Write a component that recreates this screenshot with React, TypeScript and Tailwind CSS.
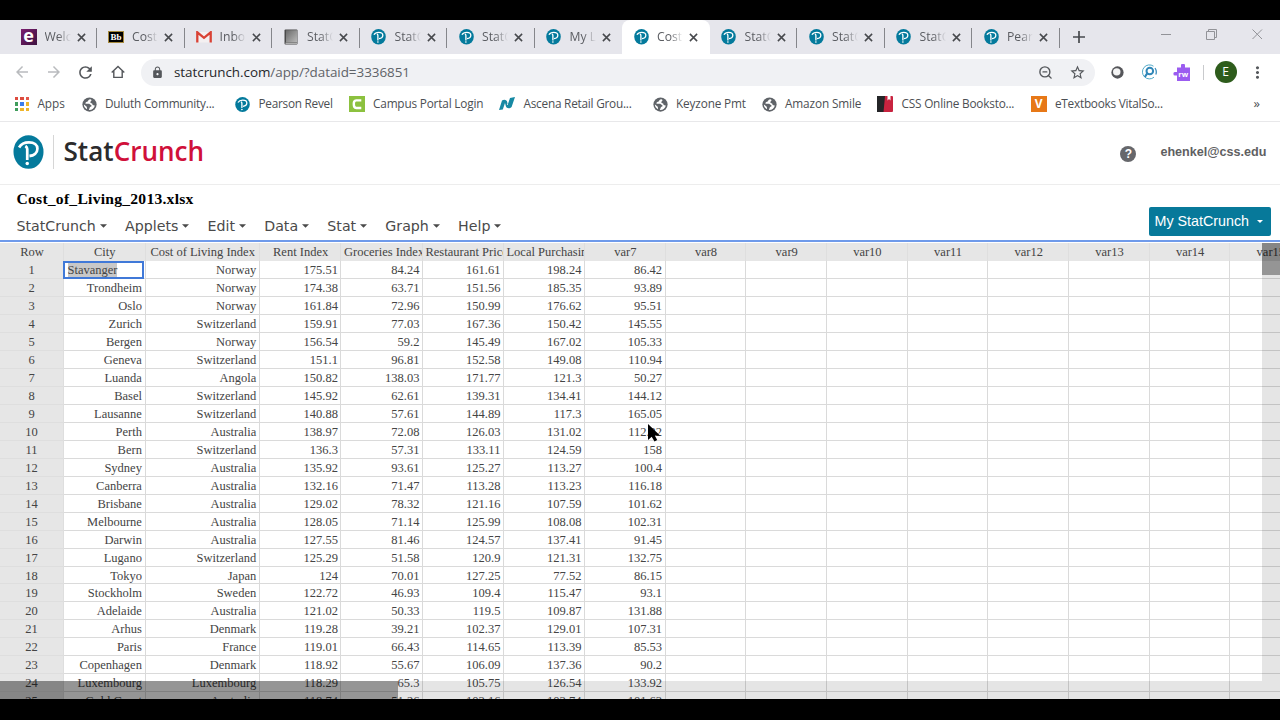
import { ZoomOut } from 'lucide-react';
import { MdArrowBack, MdArrowForward, MdLock, MdMoreVert, MdRefresh, MdStarBorder } from 'react-icons/md';
import type { ReactNode } from 'react';

type IconName = 'e' | 'bb' | 'gmail' | 'book' | 'pearson';

interface TabInfo {
  icon: IconName;
  title: string;
  active?: boolean;
}

const tabs: TabInfo[] = [
  { icon: 'e', title: 'Welc' },
  { icon: 'bb', title: 'Cost' },
  { icon: 'gmail', title: 'Inbo' },
  { icon: 'book', title: 'StatC' },
  { icon: 'pearson', title: 'StatC' },
  { icon: 'pearson', title: 'StatC' },
  { icon: 'pearson', title: 'My L' },
  { icon: 'pearson', title: 'Cost', active: true },
  { icon: 'pearson', title: 'StatC' },
  { icon: 'pearson', title: 'StatC' },
  { icon: 'pearson', title: 'StatC' },
  { icon: 'pearson', title: 'Pear' },
];

const menus = ['StatCrunch', 'Applets', 'Edit', 'Data', 'Stat', 'Graph', 'Help'];

const columns = [
  'Row', 'City', 'Cost of Living Index', 'Rent Index', 'Groceries Index', 'Restaurant Price',
  'Local Purchasing', 'var7', 'var8', 'var9', 'var10', 'var11', 'var12', 'var13', 'var14', 'var15',
];

const rows = [
  ['Stavanger', 'Norway', '175.51', '84.24', '161.61', '198.24', '86.42'],
  ['Trondheim', 'Norway', '174.38', '63.71', '151.56', '185.35', '93.89'],
  ['Oslo', 'Norway', '161.84', '72.96', '150.99', '176.62', '95.51'],
  ['Zurich', 'Switzerland', '159.91', '77.03', '167.36', '150.42', '145.55'],
  ['Bergen', 'Norway', '156.54', '59.2', '145.49', '167.02', '105.33'],
  ['Geneva', 'Switzerland', '151.1', '96.81', '152.58', '149.08', '110.94'],
  ['Luanda', 'Angola', '150.82', '138.03', '171.77', '121.3', '50.27'],
  ['Basel', 'Switzerland', '145.92', '62.61', '139.31', '134.41', '144.12'],
  ['Lausanne', 'Switzerland', '140.88', '57.61', '144.89', '117.3', '165.05'],
  ['Perth', 'Australia', '138.97', '72.08', '126.03', '131.02', '112.22'],
  ['Bern', 'Switzerland', '136.3', '57.31', '133.11', '124.59', '158'],
  ['Sydney', 'Australia', '135.92', '93.61', '125.27', '113.27', '100.4'],
  ['Canberra', 'Australia', '132.16', '71.47', '113.28', '113.23', '116.18'],
  ['Brisbane', 'Australia', '129.02', '78.32', '121.16', '107.59', '101.62'],
  ['Melbourne', 'Australia', '128.05', '71.14', '125.99', '108.08', '102.31'],
  ['Darwin', 'Australia', '127.55', '81.46', '124.57', '137.41', '91.45'],
  ['Lugano', 'Switzerland', '125.29', '51.58', '120.9', '121.31', '132.75'],
  ['Tokyo', 'Japan', '124', '70.01', '127.25', '77.52', '86.15'],
  ['Stockholm', 'Sweden', '122.72', '46.93', '109.4', '115.47', '93.1'],
  ['Adelaide', 'Australia', '121.02', '50.33', '119.5', '109.87', '131.88'],
  ['Arhus', 'Denmark', '119.28', '39.21', '102.37', '129.01', '107.31'],
  ['Paris', 'France', '119.01', '66.43', '114.65', '113.39', '85.53'],
  ['Copenhagen', 'Denmark', '118.92', '55.67', '106.09', '137.36', '90.2'],
  ['Luxembourg', 'Luxembourg', '118.29', '65.3', '105.75', '126.54', '133.92'],
  ['Gold Coast', 'Australia', '118.74', '51.26', '103.16', '103.74', '101.63'],
];

const gridCols =
  'grid grid-cols-[64px_81.5px_114.3px_81.7px_81.5px_81px_81px_80.7px_80.7px_80.7px_80.7px_80.7px_80.7px_80.7px_80.7px_80.7px]';

function PearsonIcon({ className = '' }: { className?: string }) {
  return (
    <svg viewBox="0 0 32 34" className={className} fill="none" preserveAspectRatio="none">
      <ellipse cx="16" cy="17" rx="15.5" ry="16.8" fill="#047a9c" />
      <path
        d="M6.3 12.5C8.5 8.6 12.5 7.3 16.5 7.3C22 7.3 25.2 9.8 25.2 13.7C25.2 18.2 21.5 20.6 17 21"
        stroke="#fff"
        strokeWidth="2.8"
      />
      <path d="M12.8 11C14.3 12 14.7 12.8 14.7 14V25" stroke="#fff" strokeWidth="2.8" />
      <circle cx="14.7" cy="28.5" r="1.8" fill="#fff" />
    </svg>
  );
}

function GlobeIcon() {
  return (
    <svg viewBox="0 0 16 16" className="h-[15px] w-[15px]">
      <circle cx="8" cy="8" r="7.6" fill="#5f6368" />
      <path
        d="M9 2.4C7 2.6 6.6 3.4 6.5 4.3C6.2 5.4 4.2 5 3.6 6.3C3.4 7.3 5 7.4 6.6 7.3C8.2 7.2 8.5 8 9.4 8.5C10.8 9.1 10.4 10.1 9 10.5C8 10.8 8.2 12.4 7.3 13.8C10.6 14 13.2 11.8 13.7 9C12 9.2 10.9 8.2 11 7.2C11.1 6.4 9 6.7 8.9 5.8C8.8 4.7 10 4.6 10.2 3.2Z"
        fill="#fff"
      />
      <path d="M2 8C3.5 9.2 5 9.8 5.2 11C5.4 12 5.4 12.6 5.2 13C3.4 12 1.9 10.3 2 8Z" fill="#fff" />
    </svg>
  );
}

function TabIcon({ name }: { name: IconName }) {
  if (name === 'e') {
    return (
      <span className="flex h-4 w-4 items-center justify-center bg-linear-to-br from-[#7c1d70] to-[#3d123f] pb-[4px] font-['Open_Sans',sans-serif] text-[18px] leading-none font-bold text-white">
        e
      </span>
    );
  }
  if (name === 'bb') {
    return (
      <span className="flex h-3 w-4 items-center justify-center border border-[#a78a3c] bg-black font-['Liberation_Serif',serif] text-[9px] leading-none font-bold text-white">
        Bb
      </span>
    );
  }
  if (name === 'gmail') {
    return (
      <svg viewBox="0 0 16 12" className="h-3 w-4">
        <path d="M1 1H15V11.5H1Z" fill="#f4f0f1" />
        <path d="M1.3 11.5V1.3L8 6.8L14.7 1.3V11.5" fill="none" stroke="#d94235" strokeWidth="2.3" />
      </svg>
    );
  }
  if (name === 'book') {
    return (
      <svg viewBox="0 0 14 16" className="h-4 w-3.5">
        <defs>
          <linearGradient id="cover" x1="0" y1="0" x2="1" y2="1">
            <stop offset="0" stopColor="#6a6a6a" />
            <stop offset="1" stopColor="#b9b9b9" />
          </linearGradient>
        </defs>
        <rect x=".5" y=".5" width="13" height="15" rx="1" fill="#4a4a4a" />
        <rect x="2" y="1.2" width="11" height="12" fill="url(#cover)" />
        <path d="M1.5 14.2H13" stroke="#ddd" />
      </svg>
    );
  }
  return <PearsonIcon className="h-[15.5px] w-[15px]" />;
}

function CloseIcon() {
  return (
    <svg viewBox="0 0 10 10" className="h-[9px] w-[9px]">
      <path d="M1 1L9 9M9 1L1 9" stroke="#47494d" strokeWidth="1.7" />
    </svg>
  );
}

function Tab({ tab, divider }: { tab: TabInfo; divider: boolean }) {
  return (
    <div
      className={`relative flex h-[34px] w-[87.5px] shrink-0 items-center pl-[11px] ${tab.active ? 'rounded-t-lg bg-white' : ''}`}
    >
      <span className="flex w-4 shrink-0 justify-center">
        <TabIcon name={tab.icon} />
      </span>
      <span className="ml-2 w-[26px] shrink-0 overflow-hidden mask-r-from-50% text-[12.2px] whitespace-nowrap text-[#5a5c61]">
        {tab.title}
      </span>
      <span className="ml-[6px]">
        <CloseIcon />
      </span>
      {divider && <span className="absolute top-2 right-0 h-5 w-px bg-[#85868b]" />}
    </div>
  );
}

function TabStrip() {
  return (
    <div className="flex h-[34px] shrink-0 bg-[#e6e6ec] pl-[9.5px]">
      {tabs.map((tab, i) => (
        <Tab key={i} tab={tab} divider={!tab.active && !tabs[i + 1]?.active} />
      ))}
      <svg viewBox="0 0 12 12" className="mt-[11px] ml-[13.5px] h-3 w-3">
        <path d="M6 0V12M0 6H12" stroke="#47494d" strokeWidth="1.7" />
      </svg>
      <svg viewBox="0 0 102 12" className="mt-2 ml-[76px] h-3 w-[102px]" fill="none" stroke="#929398">
        <path d="M0 6.5H10M45.5 3.5H53.5V11.5H45.5ZM47.5 3.5V1.5H55.5V9.5H53.5M91.5 1.5L101 11M101 1.5L91.5 11" />
      </svg>
    </div>
  );
}

function Toolbar() {
  return (
    <div className="flex h-[36px] shrink-0 items-center bg-white pl-[13px] text-[#54575b]">
      <MdArrowBack className="h-[18px] w-[18px] text-[#b9bbbe]" />
      <MdArrowForward className="ml-[14px] h-[18px] w-[18px] text-[#b9bbbe]" />
      <MdRefresh className="ml-[13px] h-[19px] w-[19px]" />
      <svg viewBox="0 0 14 14" className="ml-[15.5px] h-[14px] w-[14px]" fill="none" stroke="currentColor" strokeWidth="1.4">
        <path d="M.7 7.4L7 1.4L13.3 7.4M2.8 6V12.4H11.2V6" />
      </svg>
      <div className="ml-[16px] flex h-[27px] w-[954px] items-center rounded-full bg-[#f0f1f4] pl-[10px]">
        <MdLock className="h-[13px] w-[13px]" />
        <span className="ml-[10.5px] text-[13.45px] tracking-[-0.05px] text-[#5f6368]">
          <span className="text-[#26282b]">statcrunch.com</span>/app/?dataid=3336851
        </span>
        <ZoomOut className="ml-auto h-[15px] w-[15px]" strokeWidth={2.2} />
        <MdStarBorder className="mr-[9px] ml-[16px] h-[17px] w-[17px]" />
      </div>
      <svg viewBox="0 0 14 14" className="ml-[16px] h-[13px] w-[13px]">
        <circle cx="7" cy="7" r="6.6" fill="#55565a" />
        <circle cx="6.2" cy="6.3" r="4" fill="#f5f5f5" />
      </svg>
      <svg viewBox="0 0 16 16" className="ml-[17.5px] h-4 w-4" fill="none" stroke="#3187b8">
        <path d="M12.5 2.2A7 7 0 1 0 13 13.2" strokeWidth="1" stroke="#52aac8" />
        <path d="M14 4A7 7 0 0 1 14.8 10.5" strokeWidth="1.2" />
        <circle cx="8.8" cy="7" r="3.3" strokeWidth="2" />
        <path d="M6.4 9.2L3.8 13" strokeWidth="2.2" />
      </svg>
      <svg viewBox="0 0 17 17" className="ml-[15.5px] h-[17px] w-[17px]">
        <path d="M4 3.5H8V1.5A1.5 1.5 0 0 1 12 1.5V3.5H17V17H4V11.5H2.6A1.8 1.8 0 1 1 2.6 8H4Z" fill="#9b5cf0" />
        <text x="5.3" y="12.5" fill="#fff" fontSize="7.5" fontWeight="700" fontFamily="Open Sans, sans-serif">
          rw
        </text>
      </svg>
      <span className="ml-[13px] h-[15px] w-px bg-[#c9cacd]" />
      <span className="ml-[11px] flex h-[22px] w-[22px] items-center justify-center rounded-full bg-[#2e5c1c] text-[12px] text-white">
        E
      </span>
      <MdMoreVert className="ml-[11.5px] h-[19px] w-[19px]" />
    </div>
  );
}

function Bookmark({ icon, label, className }: { icon: ReactNode; label: string; className: string }) {
  return (
    <div className={`flex shrink-0 items-center whitespace-nowrap ${className}`}>
      {icon}
      <span className="ml-[8.5px]">{label}</span>
    </div>
  );
}

function AppsIcon() {
  const colors = ['#dd4b3e', '#dd4b3e', '#e2574b', '#3f9d5c', '#3b7ded', '#efb52b', '#3f9d5c', '#efb52b', '#efb52b'];
  return (
    <span className="grid grid-cols-3 gap-[2px]">
      {colors.map((color, i) => (
        <span key={i} className="h-[3.3px] w-[3.3px]" style={{ backgroundColor: color }} />
      ))}
    </span>
  );
}

function Bookmarks() {
  return (
    <div className="flex h-[32px] shrink-0 items-center border-b border-[#e8e8ea] bg-white pb-[3px] pl-[15px] text-[11.8px] text-[#4c4f53]">
      <Bookmark icon={<AppsIcon />} label="Apps" className="w-[66.5px]" />
      <Bookmark icon={<GlobeIcon />} label="Duluth Community..." className="w-[153.5px] tracking-[-0.23px]" />
      <Bookmark icon={<PearsonIcon className="h-[15px] w-[15px]" />} label="Pearson Revel" className="w-[113.5px] tracking-[-0.26px]" />
      <Bookmark
        icon={
          <svg viewBox="0 0 16 16" className="h-4 w-4">
            <rect width="16" height="16" fill="#8cc13f" />
            <path d="M12.3 4.4H7.2C5 4.4 4.8 6 4.8 8C4.8 10.5 5.3 12 7.2 12H12.3" fill="none" stroke="#fff" strokeWidth="2.4" />
          </svg>
        }
        label="Campus Portal Login"
        className="w-[150.5px] tracking-[-0.18px]"
      />
      <Bookmark
        icon={
          <svg viewBox="0 0 16 14" className="h-3.5 w-4">
            <path d="M0 13L3 3.5C5 2 8 2.5 8.3 5.5L8.6 8L11 1L16 0L12.6 10C11 11.6 7.6 12 6.8 9L6 6L3.8 12.5Z" fill="#1689a3" />
          </svg>
        }
        label="Ascena Retail Grou..."
        className="w-[153.5px] tracking-[-0.23px]"
      />
      <Bookmark icon={<GlobeIcon />} label="Keyzone Pmt" className="w-[109px] tracking-[-0.15px]" />
      <Bookmark icon={<GlobeIcon />} label="Amazon Smile" className="w-[115.5px] tracking-[-0.13px]" />
      <Bookmark
        icon={
          <svg viewBox="0 0 16 16" className="h-4 w-4">
            <rect width="16" height="16" rx="1" fill="#c8233f" />
            <path d="M0 0H8L6.5 16H0Z" fill="#242528" />
            <path d="M10.5 0H13.5V4.5L12 3L10.5 4.5Z" fill="#fff" />
          </svg>
        }
        label="CSS Online Booksto..."
        className="w-[153.5px] tracking-[-0.2px]"
      />
      <Bookmark
        icon={
          <span className="flex h-4 w-4 items-center justify-center bg-[#e77817] text-[12px] leading-none font-bold text-white">
            V
          </span>
        }
        label="eTextbooks VitalSo..."
        className="tracking-[-0.25px]"
      />
      <span className="mr-[20px] ml-auto text-[13px]">»</span>
    </div>
  );
}

function Header() {
  return (
    <div className="flex h-[63px] shrink-0 items-center border-b border-[#ededed] bg-white pb-[2px] pl-[13px]">
      <PearsonIcon className="h-[34px] w-[31px]" />
      <span className="ml-[9px] h-[34px] w-px bg-[#d6d6d6]" />
      <span className="ml-[9.5px] font-['Open_Sans',sans-serif] text-[26.1px] font-semibold text-[#2b2b2d]">
        Stat<span className="text-[#d0103a]">Crunch</span>
      </span>
      <span className="mt-[3px] ml-auto flex h-4 w-4 items-center justify-center rounded-full bg-[#66676b] font-['Liberation_Sans',sans-serif] text-[12px] font-bold text-white">
        ?
      </span>
      <span className="mt-[1px] mr-[13.5px] ml-[24px] font-['Liberation_Sans',sans-serif] text-[12.6px] font-bold text-[#5f5f62]">
        ehenkel@css.edu
      </span>
    </div>
  );
}

function Caret({ className = '' }: { className?: string }) {
  return (
    <svg viewBox="0 0 8 4" className={className} fill="currentColor">
      <path d="M0 0H8L4 4Z" />
    </svg>
  );
}

function MenuArea() {
  return (
    <div className="flex h-[55px] shrink-0 justify-between bg-white pl-[16.5px]">
      <div>
        <div className="mt-[4px] font-['Liberation_Serif',serif] text-[15.6px] leading-[20px] font-bold tracking-[0.25px] text-black">
          Cost_of_Living_2013.xlsx
        </div>
        <div className="mt-[7px] flex gap-[18.2px] font-['DejaVu_Sans',sans-serif] text-[14.2px] leading-[20px] text-[#4a4a4a]">
          {menus.map((menu) => (
            <span key={menu} className="flex items-center">
              {menu}
              <Caret className="ml-1 h-[4px] w-[7px]" />
            </span>
          ))}
        </div>
      </div>
      <button className="mt-[22px] mr-[9px] flex h-[29px] w-[122px] items-center rounded-[2px] bg-[#07799a] pl-[5.5px] font-['Liberation_Sans',sans-serif] text-[14.3px] text-white">
        My StatCrunch
        <Caret className="ml-[8px] h-[5px] w-[6px]" />
      </button>
    </div>
  );
}

function DataTable() {
  return (
    <div className="relative min-h-0 flex-1 overflow-hidden border-t-2 border-[#6f9aea] bg-white font-['Liberation_Serif',serif] text-[12.5px] leading-[19px] text-[#444]">
      <div className={`${gridCols} mt-px h-[18.3px] bg-[#e6e6e6]`}>
        {columns.map((col, i) => (
          <div
            key={col}
            className={`overflow-hidden border-r border-[#dedede] whitespace-nowrap ${i >= 4 && i <= 6 ? 'pl-[2.5px]' : 'pl-px text-center'}`}
          >
            {col}
          </div>
        ))}
      </div>
      {rows.map((row, r) => (
        <div key={r} className={`${gridCols} h-[17.957px]`}>
          {columns.map((col, c) => (
            <div
              key={col}
              className={`h-[17.957px] border-r border-b ${c === 0 ? 'border-[#dedede] bg-[#e6e6e6] text-center' : 'border-[#dadada] pr-[2.6px] text-right'}`}
            >
              {c === 0 && r + 1}
              {c > 0 && !(r === 0 && c === 1) && row[c - 1]}
            </div>
          ))}
        </div>
      ))}
      {/* cell being edited */}
      <div className="absolute top-[19px] left-[63px] h-[18px] w-[81px] border-2 border-[#4079d8] bg-white pl-[2.5px] leading-[15px]">
        <span className="bg-[#c8c8c8]">Stavanger</span>
      </div>
      {/* overlay scrollbars */}
      <div className="absolute top-px right-0 bottom-0 w-[18px] bg-black/10" />
      <div className="absolute top-px right-0 h-[32px] w-[18px] bg-black/35" />
      <div className="absolute right-[18px] bottom-0 left-0 h-[18px] bg-black/10" />
      <div className="absolute bottom-0 left-0 h-[18px] w-[398px] bg-black/35" />
      <svg viewBox="0 0 12 18" className="absolute top-[182px] left-[648px] h-[18px] w-3">
        <path d="M0 0V16L3.7 12.7L6.5 17.5L9.2 16L6.8 11.5H12Z" />
      </svg>
    </div>
  );
}

export default function App() {
  return (
    <div className="flex h-[720px] w-[1280px] flex-col overflow-hidden bg-black py-5 pb-[21px] font-['Open_Sans',sans-serif]">
      <TabStrip />
      <Toolbar />
      <Bookmarks />
      <Header />
      <MenuArea />
      <DataTable />
    </div>
  );
}
